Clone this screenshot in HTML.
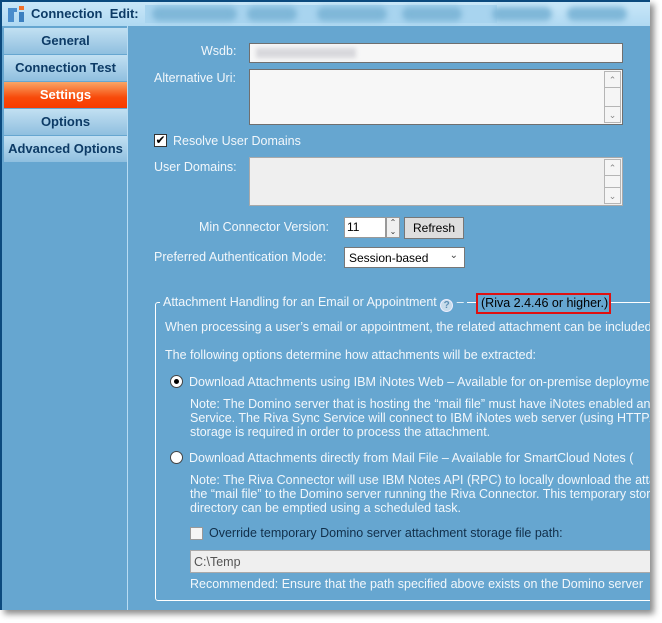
<!DOCTYPE html>
<html><head><meta charset="utf-8"><style>
*{box-sizing:border-box;margin:0;padding:0}
body{width:662px;height:623px;background:#fff;position:relative;overflow:hidden;font-family:"Liberation Sans","DejaVu Sans",sans-serif;font-size:12.5px;}
.win{position:absolute;left:0;top:0;width:650px;height:610px;background:#66a6d0;border-left:2px solid #0b4a7e;border-top:2px solid #0b4a7e;box-shadow:4px 4px 6px rgba(0,0,0,.45);overflow:hidden}
.title{position:absolute;left:0;top:0;width:650px;height:24px;background:linear-gradient(#c9e7f8,#b0d9f2);}
.title .t{position:absolute;left:29px;top:4px;font-weight:bold;font-size:13px;color:#0d3b66;}
.blur{position:absolute;top:5px;height:14px;border-radius:7px;background:#7fb7d8;filter:blur(3px)}
.nav{position:absolute;left:2px;width:123px;height:26px;background:linear-gradient(#c2e0f2,#8fbfdf);color:#0d3b66;font-weight:bold;font-size:13px;text-align:center;line-height:26px}
.nav.sel{background:linear-gradient(#f9a666,#f84a0a 60%,#f83a00);color:#fff}
.vline{position:absolute;left:125px;top:24px;width:1px;height:590px;background:#b8dcf3}
.a{position:absolute;white-space:nowrap;color:#f2f7fb}
.d{color:#112f4a}
.box{position:absolute;background:#f7f7f7;border:1px solid #6f6f6f}
.box2{position:absolute;background:#efefef;border:1px solid #a9a9a9}
.sb{position:absolute;right:1px;top:1px;bottom:1px;width:17px;border:1px solid #b5b5b5;background:#f5f5f5}
.sb i{position:absolute;left:0;width:15px;height:16px;border-bottom:1px solid #b5b5b5;font-style:normal;color:#888;font-size:9px;text-align:center;line-height:16px}
</style></head><body>
<div class="win">
 <div class="title">
  <svg style="position:absolute;left:6px;top:3px" width="18" height="17"><rect x="0" y="3" width="6" height="14" fill="#3b7fc0"/><path d="M0 3h9v4H6v10H0z" fill="#4a8dcc"/><rect x="11" y="7" width="5" height="10" fill="#3b7fc0"/><rect x="11" y="1" width="5" height="4" fill="#f0702a"/></svg>
  <div class="t">Connection&nbsp; Edit:</div>
  <div style="position:absolute;left:143px;top:3px;width:352px;height:18px;background:#a8d4ef"></div>
  <div class="blur" style="left:150px;width:85px"></div>
  <div class="blur" style="left:245px;width:50px"></div>
  <div class="blur" style="left:315px;width:70px"></div>
  <div class="blur" style="left:400px;width:60px"></div>
  <div class="blur" style="left:490px;width:60px"></div>
  <div class="blur" style="left:565px;width:60px"></div>
 </div>
 <div class="nav" style="top:26px">General</div>
 <div class="nav" style="top:53px">Connection Test</div>
 <div class="nav sel" style="top:80px">Settings</div>
 <div class="nav" style="top:107px">Options</div>
 <div class="nav" style="top:134px">Advanced Options</div>
 <div class="vline"></div>
</div>
<div style="position:absolute;left:0;top:0;width:650px;height:610px;overflow:hidden">
 <div class="a" style="left:201px;top:44px">Wsdb:</div>
 <div class="box" style="left:249px;top:43px;width:374px;height:20px"><div style="position:absolute;left:6px;top:4px;width:100px;height:10px;background:#d8d8dc;filter:blur(2px)"></div></div>
 <div class="a" style="left:154px;top:71px">Alternative Uri:</div>
 <div class="box" style="left:249px;top:69px;width:374px;height:56px"><div class="sb"><i style="top:0">&#8963;</i><i style="bottom:0;top:auto;border-bottom:0;border-top:1px solid #b5b5b5">&#8964;</i></div></div>
 <div style="position:absolute;left:154px;top:134px;width:13px;height:13px;background:#fff;border:1px solid #333;font-size:12px;line-height:11px;text-align:center;color:#000">&#10004;</div>
 <div class="a" style="left:173px;top:134px">Resolve User Domains</div>
 <div class="a" style="left:154px;top:160px">User Domains:</div>
 <div class="box2" style="left:249px;top:157px;width:374px;height:49px"><div class="sb"><i style="top:0">&#8963;</i><i style="bottom:0;top:auto;border-bottom:0;border-top:1px solid #b5b5b5">&#8964;</i></div></div>
 <div class="a" style="left:199px;top:220px">Min Connector Version:</div>
 <div class="box" style="left:344px;top:217px;width:42px;height:21px;background:#fff;border-color:#999;color:#000;padding:2px 2px;font-size:12px">11</div>
 <div style="position:absolute;left:386px;top:217px;width:14px;height:21px;background:#f0f0f0;border:1px solid #999;font-size:8px;line-height:9px;text-align:center;color:#333">&#8963;<br>&#8964;</div>
 <div style="position:absolute;left:404px;top:217px;width:60px;height:22px;background:#dedede;border:1px solid #777;color:#000;text-align:center;line-height:20px;font-size:12px">Refresh</div>
 <div class="a" style="left:154px;top:250px">Preferred Authentication Mode:</div>
 <div style="position:absolute;left:344px;top:247px;width:121px;height:21px;background:#fff;border:1px solid #777;color:#000;padding:3px 4px;font-size:12px">Session-based<span style="position:absolute;right:6px;top:2px;font-size:10px;color:#444">&#8964;</span></div>
 <div style="position:absolute;left:155px;top:302px;width:520px;height:299px;border:1px solid #fff;border-radius:3px"></div>
 <div class="a" style="left:160px;top:295px;background:#66a6d0;padding:0 3px">Attachment Handling for an Email or Appointment <span style="display:inline-block;width:13px;height:13px;border-radius:50%;background:#c8dceb;border:1px solid #eef;color:#5f8fb5;font-size:10px;line-height:11px;text-align:center;font-weight:bold;vertical-align:-2px">?</span> &#8211;</div>
 <div style="position:absolute;left:476px;top:293px;width:135px;height:21px;border:2px solid #e01010;background:#66a6d0;color:#000;padding:1px 3px;white-space:nowrap">(Riva 2.4.46 or higher.)</div>
 <div class="a" style="left:165px;top:320px">When processing a user’s email or appointment, the related attachment can be included</div>
 <div class="a" style="left:165px;top:348px">The following options determine how attachments will be extracted:</div>
 <div style="position:absolute;left:170px;top:375px;width:13px;height:13px;border-radius:50%;background:#fff;border:1px solid #444"><div style="position:absolute;left:3px;top:3px;width:5px;height:5px;border-radius:50%;background:#000"></div></div>
 <div class="a" style="left:189px;top:375px">Download Attachments using IBM iNotes Web – Available for on-premise deployment</div>
 <div class="a" style="left:190px;top:397px;line-height:14px">Note: The Domino server that is hosting the “mail file” must have iNotes enabled and<br>Service. The Riva Sync Service will connect to IBM iNotes web server (using HTTP/S)<br>storage is required in order to process the attachment.</div>
 <div style="position:absolute;left:170px;top:451px;width:13px;height:13px;border-radius:50%;background:#fff;border:1px solid #444"></div>
 <div class="a" style="left:189px;top:451px">Download Attachments directly from Mail File – Available for SmartCloud Notes (</div>
 <div class="a" style="left:190px;top:473px;line-height:14px">Note: The Riva Connector will use IBM Notes API (RPC) to locally download the attachment<br>the “mail file” to the Domino server running the Riva Connector. This temporary storage<br>directory can be emptied using a scheduled task.</div>
 <div style="position:absolute;left:190px;top:527px;width:13px;height:13px;background:#f5f5f5;border:1px solid #999"></div>
 <div class="a d" style="left:209px;top:526px">Override temporary Domino server attachment storage file path:</div>
 <div class="box2" style="left:190px;top:550px;width:480px;height:23px;color:#555;padding:4px 3px">C:\Temp</div>
 <div class="a" style="left:190px;top:577px">Recommended: Ensure that the path specified above exists on the Domino server</div>
</div>
</body></html>
